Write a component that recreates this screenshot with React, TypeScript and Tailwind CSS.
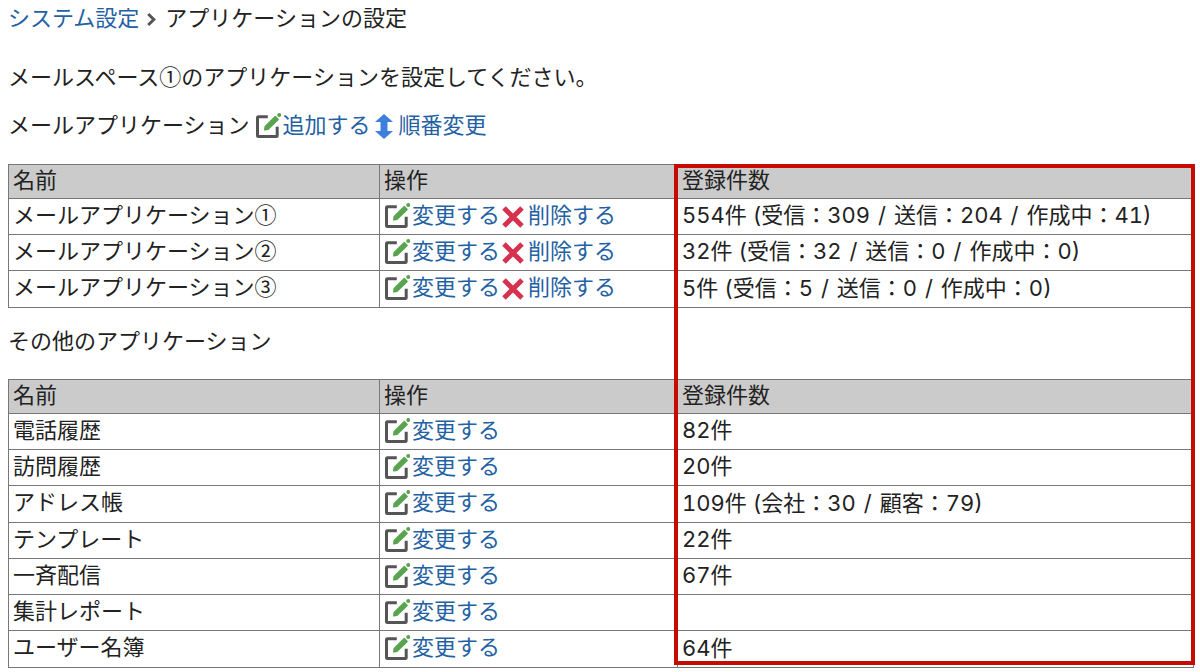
import React from "react";

type AppRow = {
  name: string;
  total?: string;
  details?: string[];
  removable?: boolean;
};

const mailApps: AppRow[] = [
  {
    name: "メールアプリケーション①",
    total: "554件",
    details: ["受信：309", "送信：204", "作成中：41"],
    removable: true,
  },
  {
    name: "メールアプリケーション②",
    total: "32件",
    details: ["受信：32", "送信：0", "作成中：0"],
    removable: true,
  },
  {
    name: "メールアプリケーション③",
    total: "5件",
    details: ["受信：5", "送信：0", "作成中：0"],
    removable: true,
  },
];

const otherApps: AppRow[] = [
  { name: "電話履歴", total: "82件" },
  { name: "訪問履歴", total: "20件" },
  { name: "アドレス帳", total: "109件", details: ["会社：30", "顧客：79"] },
  { name: "テンプレート", total: "22件" },
  { name: "一斉配信", total: "67件" },
  { name: "集計レポート" },
  { name: "ユーザー名簿", total: "64件" },
];

const EditIcon = () => (
  <svg viewBox="0 0 26 26" className="size-[26px] shrink-0" fill="none" aria-hidden="true">
    <path
      d="M12.8 3.8H3.5Q2.5 3.8 2.5 4.8V22.5Q2.5 23.5 3.5 23.5H21.2Q22.2 23.5 22.2 22.5V13.7"
      stroke="#555"
      strokeWidth="3"
    />
    <path
      d="M9.7 16.9L10.2 13.4L20.3 3.6L23.2 6.5L13.1 16.3Z"
      fill="#5aa450"
      stroke="#5aa450"
      strokeWidth="1.4"
      strokeLinejoin="round"
    />
    <circle cx="24.2" cy="2" r="2" fill="#5aa450" />
  </svg>
);

const DeleteIcon = () => (
  <svg viewBox="0 0 26 26" className="size-[26px] shrink-0" aria-hidden="true">
    <path d="M4 5L22 23M22 5L4 23" stroke="#d6324f" strokeWidth="5" />
  </svg>
);

const SortIcon = () => (
  <svg viewBox="0 0 26 26" className="size-[26px] shrink-0" aria-hidden="true">
    <path
      d="M13 1L22 9H16.5V18H22L13 26L4 18H9.5V9H4Z"
      fill="#3f7fdc"
    />
  </svg>
);

const ActionLink = ({
  icon,
  children,
}: {
  icon: React.ReactNode;
  children: React.ReactNode;
}) => (
  <a href="#" className="inline-flex items-center gap-[2px] text-[#2461a3] hover:underline">
    {icon}
    {children}
  </a>
);

const Count = ({ total, details }: { total?: string; details?: string[] }) => (
  <span className="font-[Inter,'Noto_Sans_CJK_JP',sans-serif] tabular-nums">
    {total}
    {details && (
      <>
        {" ("}
        {details.map((detail, index) => (
          <React.Fragment key={detail}>
            {index > 0 && <span className="mx-[2px]"> / </span>}
            {detail}
          </React.Fragment>
        ))}
        {")"}
      </>
    )}
  </span>
);

function AppTable({ label, rows }: { label: string; rows: AppRow[] }) {
  return (
    <table
      aria-label={label}
      className="w-full table-fixed border-collapse text-left [&_td]:border [&_td]:border-[#777] [&_td]:px-1 [&_td]:pt-0 [&_td]:pb-[2px] [&_td]:leading-8 [&_th]:border [&_th]:border-[#777] [&_th]:px-1 [&_th]:pt-0 [&_th]:pb-[2px] [&_th]:leading-7 [&_th]:font-normal"
    >
      <thead className="bg-[#cbcbcb]">
        <tr className="h-[34px]">
          <th scope="col" className="w-[371px]">
            名前
          </th>
          <th scope="col" className="w-[298px]">
            操作
          </th>
          <th scope="col">登録件数</th>
        </tr>
      </thead>
      <tbody>
        {rows.map((row) => (
          <tr key={row.name} className="h-9 nth-[4n+3]:h-[37px]">
            <td>{row.name}</td>
            <td>
              <div className="flex items-center">
                <ActionLink icon={<EditIcon />}>変更する</ActionLink>
                {row.removable && (
                  <ActionLink icon={<DeleteIcon />}>削除する</ActionLink>
                )}
              </div>
            </td>
            <td>
              <Count total={row.total} details={row.details} />
            </td>
          </tr>
        ))}
      </tbody>
    </table>
  );
}

function App() {
  return (
    <main className="bg-white pt-[3px] pr-[6px] pl-2 font-['Liberation_Sans','Noto_Sans_CJK_JP',sans-serif] text-[22px] leading-8 text-[#222]">
      <nav aria-label="パンくず" className="flex items-center">
        <a href="#" className="text-[#2461a3] hover:underline">
          システム設定
        </a>
        <svg viewBox="0 0 10 15" className="mx-2 h-[15px] w-[10px]" fill="none" aria-hidden="true">
          <path d="M1.2 2L6.8 7.5L1.2 13" stroke="#555" strokeWidth="3" />
        </svg>
        <span>アプリケーションの設定</span>
      </nav>

      <p className="mt-[27px]">
        メールスペース①のアプリケーションを設定してください。
      </p>

      <div className="mt-4 flex items-center">
        <h2 className="mr-[5px]">メールアプリケーション</h2>
        <ActionLink icon={<EditIcon />}>追加する</ActionLink>
        <ActionLink icon={<SortIcon />}>順番変更</ActionLink>
      </div>

      <div className="relative mt-[22px]">
        <AppTable label="メールアプリケーション" rows={mailApps} />
        <h2 className="mt-[18px] mb-[21px]">その他のアプリケーション</h2>
        <AppTable label="その他のアプリケーション" rows={otherApps} />

        {/* highlight around the count column of both tables */}
        <div className="pointer-events-none absolute top-0 -right-px bottom-[3px] left-[666px] border-4 border-[#c60c00]" />
      </div>
    </main>
  );
}

export default App;
